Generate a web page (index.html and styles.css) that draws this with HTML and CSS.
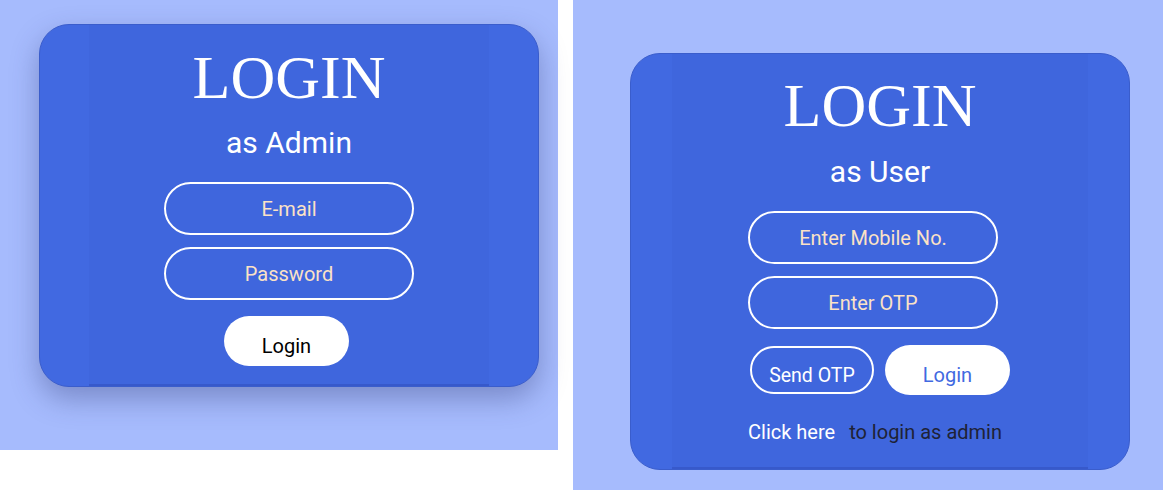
FILE: index.html
```html
<!DOCTYPE html>
<html lang="en">
<head>
<meta charset="utf-8">
<title>Login</title>
<link rel="stylesheet" href="styles.css">
</head>
<body>
<div class="page">
  <section class="panel panel-admin">
    <div class="card card-admin">
      <div class="column">
        <h1 class="title">LOGIN</h1>
        <h2 class="subtitle">as Admin</h2>
        <input class="field" type="text" placeholder="E-mail">
        <input class="field field-gap" type="password" placeholder="Password">
        <button class="btn btn-solid btn-dark">Login</button>
      </div>
    </div>
  </section>
  <section class="panel panel-user">
    <div class="card card-user">
      <div class="column column-user">
        <h1 class="title">LOGIN</h1>
        <h2 class="subtitle subtitle-user">as User</h2>
        <input class="field field-shift" type="text" placeholder="Enter Mobile No.">
        <input class="field field-gap field-shift" type="text" placeholder="Enter OTP">
        <div class="btn-row">
          <button class="btn btn-outline">Send OTP</button>
          <button class="btn btn-solid btn-blue">Login</button>
        </div>
        <p class="switch"><span class="switch-link">Click here</span><span class="switch-text">to login as admin</span></p>
      </div>
    </div>
  </section>
</div>
</body>
</html>
```
FILE: styles.css
```css
html, body {
  margin: 0;
  padding: 0;
  background: #ffffff;
}
body {
  width: 1163px;
  height: 490px;
  overflow: hidden;
  font-family: Roboto, "Liberation Sans", Arial, sans-serif;
}
.page {
  display: flex;
  align-items: flex-start;
  gap: 15px;
}
.panel {
  background: #a6bbfd;
  box-sizing: border-box;
}
.panel-admin {
  width: 558px;
  height: 450px;
  padding: 24px 0 0 39px;
}
.panel-user {
  width: 590px;
  height: 490px;
  padding: 53px 0 0 57px;
}
.card {
  box-sizing: border-box;
  width: 500px;
  background: #4169e1;
  border: 1px solid #3a5dcc;
  border-radius: 30px;
  display: flex;
  justify-content: center;
  overflow: hidden;
}
.card-admin {
  height: 363px;
  box-shadow: 0 12px 28px rgba(40, 50, 110, 0.35);
}
.card-user {
  height: 417px;
}
.column {
  width: 400px;
  background: rgba(20, 30, 110, 0.035);
  border-bottom: 2px solid rgba(30, 50, 150, 0.25);
  display: flex;
  flex-direction: column;
  align-items: center;
  padding-top: 17px;
  box-sizing: border-box;
}
.column-user {
  width: 416px;
  padding-top: 16px;
}
.title {
  margin: 0;
  font-family: "Liberation Serif", "Times New Roman", serif;
  font-weight: normal;
  font-size: 62px;
  line-height: 70px;
  color: #ffffff;
}
.subtitle {
  margin: 13px 0 0;
  font-weight: normal;
  font-size: 30px;
  line-height: 36px;
  color: #ffffff;
}
.subtitle-user {
  margin-top: 14px;
}
.field {
  box-sizing: border-box;
  width: 250px;
  height: 53px;
  margin-top: 21px;
  border: 2px solid #ffffff;
  border-radius: 30px;
  background: transparent;
  text-align: center;
  font-family: Roboto, "Liberation Sans", Arial, sans-serif;
  font-size: 20px;
  color: #ffffff;
  outline: none;
  padding: 0 10px;
}
.field::placeholder {
  color: #fbe2c6;
  opacity: 1;
}
.field-gap {
  margin-top: 12px;
}
.field-shift {
  margin-right: 14px;
}
.btn {
  box-sizing: border-box;
  width: 125px;
  height: 50px;
  margin-top: 16px;
  border-radius: 26px;
  font-family: Roboto, "Liberation Sans", Arial, sans-serif;
  font-size: 20px;
  line-height: 24px;
  padding: 10px 0 0;
  cursor: pointer;
}
.btn-solid {
  background: #ffffff;
  border: none;
}
.btn-dark {
  color: #000000;
  margin-right: 5px;
}
.btn-blue {
  color: #4169e1;
  margin-top: 0;
}
.btn-row {
  display: flex;
  align-items: center;
  gap: 11px;
  margin-top: 16px;
}
.btn-outline {
  width: 124px;
  height: 48px;
  margin-top: 0;
  background: transparent;
  border: 2px solid #ffffff;
  color: #ffffff;
  font-size: 19.5px;
  padding-top: 12px;
}
.switch {
  margin: 25px 10px 0 0;
  font-size: 20px;
  line-height: 24px;
  display: flex;
  gap: 14px;
}
.switch-link {
  color: #ffffff;
}
.switch-text {
  color: #1e2236;
}
```
